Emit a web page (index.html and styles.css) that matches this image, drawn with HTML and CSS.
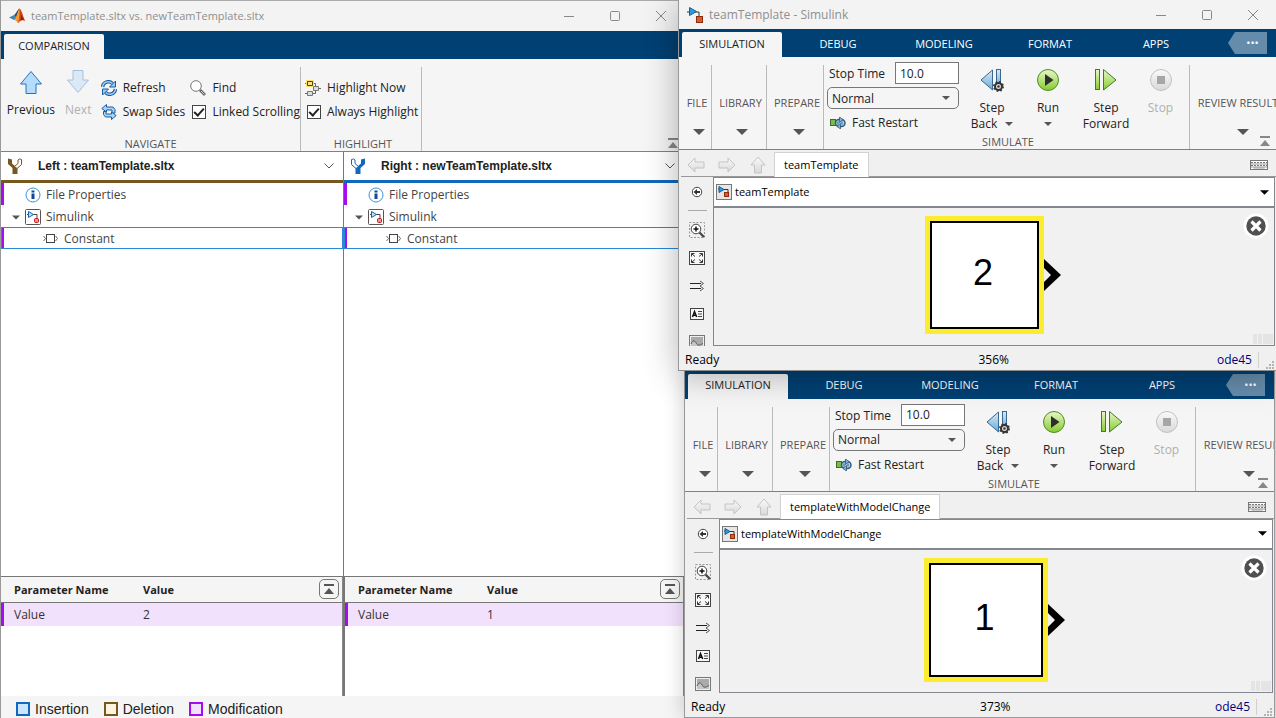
FILE: index.html
```html
<!DOCTYPE html>
<html lang="en">
<head>
    <meta charset="UTF-8">
    <title>teamTemplate.sltx vs. newTeamTemplate.sltx</title>
    <link rel="stylesheet" href="styles.css">
</head>
<body>
    <!-- shared icons -->
    <svg class="sprite" width="0" height="0">
        <defs>
            <linearGradient id="g-green" x1="0" y1="0" x2="0" y2="1"><stop offset="0" stop-color="#e8f7c8"/><stop offset="1" stop-color="#86cc2e"/></linearGradient>
            <linearGradient id="g-blue" x1="0" y1="0" x2="0" y2="1"><stop offset="0" stop-color="#d8ecf8"/><stop offset="1" stop-color="#6aa8d4"/></linearGradient>
            <linearGradient id="g-gray" x1="0" y1="0" x2="0" y2="1"><stop offset="0" stop-color="#fafafa"/><stop offset="1" stop-color="#d8d8d8"/></linearGradient>
        </defs>
        <symbol id="i-min" viewBox="0 0 12 12"><path d="M1 6.500h10" stroke="#888" fill="none"/></symbol>
        <symbol id="i-max" viewBox="0 0 12 12"><rect x="1.500" y="1.500" width="9" height="9" rx="1" stroke="#888" fill="none"/></symbol>
        <symbol id="i-close" viewBox="0 0 12 12"><path d="M1 1l10 10M11 1L1 11" stroke="#888" fill="none"/></symbol>
        <symbol id="i-caret" viewBox="0 0 12 6"><path d="M0 0h12L6 6z"/></symbol>
        <symbol id="i-collapse" viewBox="0 0 12 12"><path d="M1 1h10v2H1zM6 5l5 6H1z"/></symbol>
        <symbol id="i-chevron" viewBox="0 0 10 6"><path d="M.5 .5L5 5L9.500 .5" fill="none" stroke="#555"/></symbol>
        <symbol id="i-info" viewBox="0 0 16 16"><circle cx="8" cy="8" r="7" fill="#fff" stroke="#3a92dc"/><path d="M6.500 3.500h3v2h-3zM6.500 6.500h3V12h-3z" fill="#10489a"/></symbol>
        <symbol id="i-fork" viewBox="0 0 16 16"><path d="M15 .5v5.500l-4.500 4V16h-5V9.500L8 8l3-2.500V1.500z" fill="currentColor"/><path d="M5 2v3.500l3.500 3L6 10.500L1.500 6.500V1.500l2-.5z" fill="#fff" stroke="currentColor"/></symbol>
        <symbol id="i-model" viewBox="0 0 16 16"><rect x=".5" y=".5" width="15" height="15" rx="1" fill="#fff" stroke="#555"/><path d="M2 5.500h2M8 5.500h4v4" stroke="#444" fill="none"/><path d="M3.500 2.500v6l5-3z" fill="#bfe0fa" stroke="#1c5fa8"/><rect x="9.500" y="9.500" width="4" height="4" rx="1" fill="#f09090" stroke="#c01818"/></symbol>
        <symbol id="i-block" viewBox="0 0 16 12"><rect x="3.500" y="1.500" width="8" height="8" fill="#fff" stroke="#444"/><path d="M.5 3l2 2.500L.5 8M12.500 3l2 2.500l-2 2.500" fill="none" stroke="#666"/></symbol>
        <symbol id="i-simulink" viewBox="0 0 16 16"><path d="M0 5h3M7 5h5v4" stroke="#333" fill="none"/><path d="M2.500 .5v8l7-4z" fill="#2c9ade" stroke="#155f9e"/><rect x="9.500" y="9.500" width="6" height="6" fill="#e05a28" stroke="#8e2c10"/></symbol>
        <symbol id="i-modelbox" viewBox="0 0 16 16"><rect x=".5" y=".5" width="15" height="15" fill="#e6e6e6" stroke="#777"/><path d="M2 5h2M8 5.500h4v3" stroke="#333" fill="none"/><path d="M3 2.500v6l5-3z" fill="#2c9ade" stroke="#155f9e"/><rect x="8.500" y="8.500" width="4" height="4" fill="#e05a28" stroke="#8e2c10"/></symbol>
        <symbol id="i-fast" viewBox="0 0 16 12"><rect x=".5" y="2.500" width="5" height="6" fill="#76bd4a" stroke="#3d7022"/><rect x="5.500" y="2.500" width="9.500" height="7" rx="3.500" fill="#b4d4ea" stroke="#2d5c80" stroke-width="1.500"/><path d="M8 4.500v3M12 4.500v3" stroke="#2d5c80"/><path d="M9.500 0l3.500 2.500l-3.500 3zM10.500 6.500l-3.500 3l3.500 2.500z" fill="#82b6da" stroke="#204a68" stroke-width=".7"/></symbol>
        <symbol id="i-stepback" viewBox="0 0 24 24"><path d="M12.500 2v20L1 12z" fill="url(#g-blue)" stroke="#3b6790"/><rect x="16.500" y="1.500" width="4" height="17" fill="url(#g-blue)" stroke="#3b6790"/><circle cx="18.500" cy="18.500" r="3.500" fill="#ddd" stroke="#333" stroke-width="2"/><circle cx="18.500" cy="18.500" r="4.700" fill="none" stroke="#333" stroke-width="1.500" stroke-dasharray="1.800 1.900"/><circle cx="18.500" cy="18.500" r="1.200" fill="#333"/></symbol>
        <symbol id="i-run" viewBox="0 0 24 24"><circle cx="12" cy="12" r="10.500" fill="url(#g-green)" stroke="#4d8c24"/><path d="M9 6v12l8.500-6z" fill="#2e2e2e"/></symbol>
        <symbol id="i-stepfwd" viewBox="0 0 24 24"><rect x="1.500" y="1.500" width="4" height="20" fill="url(#g-green)" stroke="#3f7a2e"/><path d="M9.500 1.500v20.500L22 12z" fill="url(#g-green)" stroke="#3f7a2e"/></symbol>
        <symbol id="i-stop" viewBox="0 0 24 24"><circle cx="12" cy="12" r="10.500" fill="url(#g-gray)" stroke="#c2c2c2"/><rect x="8" y="8" width="8" height="8" fill="#a6a6a6"/></symbol>
        <symbol id="i-navarrow" viewBox="0 0 18 16"><path d="M1 8l7-7v4h9v6H8v4z" fill="url(#g-gray)" stroke="#c4c4c4"/></symbol>
        <symbol id="i-navup" viewBox="0 0 16 18"><path d="M8 1l7 8h-3.500v8h-7V9H1z" fill="url(#g-gray)" stroke="#c4c4c4"/></symbol>
        <symbol id="i-keyboard" viewBox="0 0 18 10"><rect x=".5" y=".5" width="17" height="9" fill="#fff" stroke="#777"/><path d="M1 2.500h16M1 5.500h16" stroke="#777" stroke-dasharray="2 1"/><path d="M1 4h16M3.500 8h11M1 7h16" stroke="#999" fill="none"/></symbol>
        <symbol id="i-hide" viewBox="0 0 16 16"><circle cx="8" cy="8" r="4.700" fill="#fff" stroke="#444"/><path d="M11 8H7" stroke="#333" stroke-width="2"/><path d="M4.500 8L8 5v6z" fill="#333"/></symbol>
        <symbol id="i-zoom" viewBox="0 0 16 16"><rect x=".5" y=".5" width="15" height="15" fill="none" stroke="#999" stroke-dasharray="2 1.500"/><circle cx="7" cy="7" r="4.800" fill="#fff" stroke="#444"/><path d="M4.500 7h5M7 4.500v5" stroke="#111" stroke-width="1.500"/><path d="M10.500 10.500l4.500 4.500" stroke="#444" stroke-width="2.200"/></symbol>
        <symbol id="i-fit" viewBox="0 0 16 16"><rect x=".5" y="1.500" width="15" height="13" fill="#f8f8f8" stroke="#444"/><path d="M2.500 6.500v-3h3M10.500 3.500h3v3M13.500 9.500v3h-3M5.500 12.500h-3v-3M3 4l3 2.500M13 4l-3 2.500M13 12l-3-2.500M3 12l3-2.500" fill="none" stroke="#333"/></symbol>
        <symbol id="i-signal" viewBox="0 0 16 16"><path d="M1 5.500h11M1 10.500h11" stroke="#222"/><path d="M11 3l3.500 2.500L11 8M11 8l3.500 2.500L11 13" fill="none" stroke="#555"/></symbol>
        <symbol id="i-note" viewBox="0 0 16 16"><rect x="1.500" y="2.500" width="13" height="11" fill="#f8f8f8" stroke="#444"/><path d="M3.500 11L5.500 5.500L7.700 11M4 9.200h3" fill="none" stroke="#111" stroke-width="1.500"/><path d="M9 5.500h4M9 8h4M9 10.500h4" stroke="#444"/></symbol>
        <symbol id="i-image" viewBox="0 0 16 16"><rect x=".5" y="1.500" width="15" height="13" fill="#eee" stroke="#777"/><rect x="2" y="3" width="12" height="10" fill="#aaa"/><path d="M2 10c2-5 4-3 5.500-.5s3 2 6.500 0V13H2z" fill="#c4c4c4"/><path d="M2 10c2-5 4-3 5.500-.5s3 2 6.500 0" fill="none" stroke="#555"/></symbol>
        <symbol id="i-dismiss" viewBox="0 0 26 26"><circle cx="13" cy="13" r="12.500" fill="#fff"/><circle cx="13" cy="13" r="9.700" fill="#505050"/><path d="M8.500 8.500l9 9M17.500 8.500l-9 9" stroke="#fff" stroke-width="3.200"/></symbol>
        <symbol id="i-port" viewBox="0 0 17 32"><path d="M0 0L17 16L0 32V23L7 16L0 9z" fill="#000"/></symbol>
        <symbol id="i-grip" viewBox="0 0 9 9"><path d="M6 0h2v2H6zM3 3h2v2H3zM6 3h2v2H6zM0 6h2v2H0zM3 6h2v2H3zM6 6h2v2H6z" fill="#b4b4b4"/></symbol>
    </svg>

    <main class="desktop">
        <section class="window compare">
            <header class="titlebar">
                <svg class="logo" viewBox="0 0 16 16"><path d="M0 9.500l5-2.500l2.500 2.500L5 12z" fill="#3f86b8"/><path d="M5 7c2-.5 3.500-6 5.500-6.500L7.500 9.500z" fill="#26506e"/><path d="M10.500 .5C8.500 4 7.500 9 5 12c2-.5 3 1 4 3c2-1 3-4 7-2C14 8 12.500 1 10.500.5z" fill="#d8501e"/><path d="M10.500 .5c0 5 0 9-1.500 14.500c-1-2-2-3.500-4-3c3-3 3.500-8 5.500-11.500z" fill="#f4a030"/><path d="M10.500 1c1 4 2.500 8 5.500 12c-1.500-2-3.500-1-4.500 0C12.500 9 11.500 5 10.500 1z" fill="#8e1c14"/></svg>
                <h1>teamTemplate.sltx vs. newTeamTemplate.sltx</h1>
                <button class="winbtn" aria-label="Minimize"><svg><use href="#i-min"/></svg></button>
                <button class="winbtn" aria-label="Maximize"><svg><use href="#i-max"/></svg></button>
                <button class="winbtn" aria-label="Close"><svg><use href="#i-close"/></svg></button>
            </header>
            <nav class="tabs">
                <button class="tab active">COMPARISON</button>
            </nav>
            <div class="ribbon">
                <div class="group navigate">
                    <div class="tools">
                        <button class="big"><svg class="icon24" viewBox="0 0 24 24"><path d="M12 1.500L22.500 14H17v9.500H7V14H1.500z" fill="#b4dcfc" stroke="#2b70bb"/></svg>Previous</button>
                        <button class="big" disabled><svg class="icon24" viewBox="0 0 24 24"><path d="M12 22.500L1.500 10H7V.5h10V10h5.500z" fill="#dbe9f6" stroke="#a5c0de"/></svg>Next</button>
                        <div class="stack refresh">
                            <button class="small"><svg class="icon16" viewBox="0 0 16 16"><path d="M1.500 7C2 2 8 0 11.500 3.500M14.500 9C14 14 8 16 4.500 12.500" fill="none" stroke="#1c5ba0" stroke-width="3.500"/><path d="M1.500 7C2 2 8 0 11.500 3.500M14.500 9C14 14 8 16 4.500 12.500" fill="none" stroke="#9ccdf2" stroke-width="1.500"/><path d="M14.500 1v6h-6zM1.500 15V9h6z" fill="#9ccdf2" stroke="#1c5ba0"/></svg>Refresh</button>
                            <button class="small"><svg class="icon16" viewBox="0 0 16 16"><path d="M5.500 .5L.8 4.500L5.500 8V6H11v3h3V5.500L12 3H5.500z" fill="#a8d4f6" stroke="#1c5ba0"/><path d="M10.500 15.500l4.700-4L10.500 8v2H5V7.500H2.500v3l2 2.500h6z" fill="#a8d4f6" stroke="#1c5ba0"/></svg>Swap Sides</button>
                        </div>
                        <div class="stack find">
                            <button class="small"><svg class="icon16" viewBox="0 0 16 16"><circle cx="6" cy="6" r="5.300" fill="#fff" stroke="#777"/><path d="M10 10l5 5" stroke="#666" stroke-width="2.800"/><path d="M11 11l3.500 3.500" stroke="#ccc"/></svg>Find</button>
                            <label class="check"><input type="checkbox" checked>Linked Scrolling</label>
                        </div>
                    </div>
                    <div class="caption">NAVIGATE</div>
                </div>
                <div class="group highlight">
                    <div class="tools">
                        <div class="stack">
                            <button class="small"><svg class="icon16" viewBox="0 0 16 16"><path d="M0 3.500h2M8 3.500h2.500v3M0 13.500h2M8 13.500h2.500v-3M14 8.500h2" stroke="#666" fill="none"/><path d="M1 0h8v7H1z" fill="#fce26a"/><path d="M2.500 1.500h5v4h-5z" fill="#fbe67e" stroke="#4a4214"/><path d="M8.500 6.500h5v4h-5zM2.500 11.500h5v4h-5z" fill="#ddd" stroke="#777"/></svg>Highlight Now</button>
                            <label class="check"><input type="checkbox" checked>Always Highlight</label>
                        </div>
                    </div>
                    <div class="caption">HIGHLIGHT</div>
                </div>
                <button class="collapse" aria-label="Collapse toolstrip"><svg><use href="#i-collapse"/></svg></button>
            </div>

            <div class="panes">
                <div class="pane left">
                    <div class="pane-head">
                        <svg class="icon16 fork"><use href="#i-fork"/></svg>
                        <h2>Left : teamTemplate.sltx</h2>
                        <button class="plain" aria-label="Choose left file"><svg class="chev"><use href="#i-chevron"/></svg></button>
                    </div>
                    <ul class="tree">
                        <li class="changed"><svg class="icon16"><use href="#i-info"/></svg>File Properties</li>
                        <li class="parent"><svg class="twist"><use href="#i-caret"/></svg><svg class="icon16"><use href="#i-model"/></svg>Simulink</li>
                        <li class="changed selected"><svg class="block"><use href="#i-block"/></svg>Constant</li>
                    </ul>
                    <div class="params">
                        <button class="fold" aria-label="Collapse parameters"><svg><use href="#i-collapse"/></svg></button>
                        <table>
                            <thead><tr><th>Parameter Name</th><th>Value</th></tr></thead>
                            <tbody><tr><td>Value</td><td>2</td></tr></tbody>
                        </table>
                    </div>
                </div>
                <div class="pane right">
                    <div class="pane-head">
                        <svg class="icon16 fork"><use href="#i-fork"/></svg>
                        <h2>Right : newTeamTemplate.sltx</h2>
                        <button class="plain" aria-label="Choose right file"><svg class="chev"><use href="#i-chevron"/></svg></button>
                    </div>
                    <ul class="tree">
                        <li class="changed"><svg class="icon16"><use href="#i-info"/></svg>File Properties</li>
                        <li class="parent"><svg class="twist"><use href="#i-caret"/></svg><svg class="icon16"><use href="#i-model"/></svg>Simulink</li>
                        <li class="changed selected"><svg class="block"><use href="#i-block"/></svg>Constant</li>
                    </ul>
                    <div class="params">
                        <button class="fold" aria-label="Collapse parameters"><svg><use href="#i-collapse"/></svg></button>
                        <table>
                            <thead><tr><th>Parameter Name</th><th>Value</th></tr></thead>
                            <tbody><tr><td>Value</td><td>1</td></tr></tbody>
                        </table>
                    </div>
                </div>
            </div>
            <footer class="legend">
                <span class="key insertion">Insertion</span>
                <span class="key deletion">Deletion</span>
                <span class="key modification">Modification</span>
            </footer>
        </section>

        <div class="models">
            <section class="window model front">
                <header class="titlebar">
                    <svg class="logo"><use href="#i-simulink"/></svg>
                    <h1>teamTemplate - Simulink</h1>
                    <button class="winbtn" aria-label="Minimize"><svg><use href="#i-min"/></svg></button>
                    <button class="winbtn" aria-label="Maximize"><svg><use href="#i-max"/></svg></button>
                    <button class="winbtn" aria-label="Close"><svg><use href="#i-close"/></svg></button>
                </header>
                <nav class="tabs">
                    <button class="tab active">SIMULATION</button>
                    <button class="tab">DEBUG</button>
                    <button class="tab">MODELING</button>
                    <button class="tab">FORMAT</button>
                    <button class="tab">APPS</button>
                    <button class="more" aria-label="More">•••</button>
                </nav>
                <div class="ribbon">
                    <button class="folded file">FILE<svg><use href="#i-caret"/></svg></button>
                    <button class="folded library">LIBRARY<svg><use href="#i-caret"/></svg></button>
                    <button class="folded prepare">PREPARE<svg><use href="#i-caret"/></svg></button>
                    <div class="group simulate">
                        <div class="tools">
                            <div class="options">
                                <label for="stop1">Stop Time</label>
                                <input id="stop1" type="text" value="10.0">
                                <div class="mode">
                                    <select aria-label="Simulation mode"><option>Normal</option></select>
                                    <svg><use href="#i-caret"/></svg>
                                </div>
                                <button class="small"><svg class="icon16"><use href="#i-fast"/></svg>Fast Restart</button>
                            </div>
                            <button class="big"><svg class="icon24"><use href="#i-stepback"/></svg>Step<span>Back <svg class="caret"><use href="#i-caret"/></svg></span></button>
                            <button class="big"><svg class="icon24"><use href="#i-run"/></svg>Run<span><svg class="caret"><use href="#i-caret"/></svg></span></button>
                            <button class="big wide"><svg class="icon24"><use href="#i-stepfwd"/></svg>Step<span>Forward</span></button>
                            <button class="big" disabled><svg class="icon24"><use href="#i-stop"/></svg>Stop</button>
                        </div>
                        <div class="caption">SIMULATE</div>
                    </div>
                    <button class="folded review">REVIEW RESULTS<svg><use href="#i-caret"/></svg></button>
                    <button class="collapse" aria-label="Collapse toolstrip"><svg><use href="#i-collapse"/></svg></button>
                </div>
                <div class="docbar">
                    <button class="nav" aria-label="Back" disabled><svg><use href="#i-navarrow"/></svg></button>
                    <button class="nav forward" aria-label="Forward" disabled><svg><use href="#i-navarrow"/></svg></button>
                    <button class="nav up" aria-label="Up" disabled><svg><use href="#i-navup"/></svg></button>
                    <button class="doc">teamTemplate</button>
                    <button class="keys" aria-label="Shortcuts"><svg><use href="#i-keyboard"/></svg></button>
                </div>
                <div class="editor">
                    <div class="palette">
                        <button aria-label="Hide browser"><svg><use href="#i-hide"/></svg></button>
                        <hr>
                        <button aria-label="Zoom"><svg><use href="#i-zoom"/></svg></button>
                        <button aria-label="Fit to view"><svg><use href="#i-fit"/></svg></button>
                        <button aria-label="Signals"><svg><use href="#i-signal"/></svg></button>
                        <button aria-label="Annotation"><svg><use href="#i-note"/></svg></button>
                        <button aria-label="Image"><svg><use href="#i-image"/></svg></button>
                    </div>
                    <div class="view">
                        <button class="crumb"><svg class="icon16"><use href="#i-modelbox"/></svg>teamTemplate<svg class="drop"><use href="#i-caret"/></svg></button>
                        <div class="canvas">
                            <div class="constant">2<svg class="port"><use href="#i-port"/></svg></div>
                            <button class="dismiss" aria-label="Clear highlight"><svg><use href="#i-dismiss"/></svg></button>
                            <div class="overview"><i></i><i></i><i></i></div>
                        </div>
                    </div>
                </div>
                <footer class="status">
                    <span>Ready</span><span>356%</span><a href="#solver">ode45</a>
                    <svg class="grip"><use href="#i-grip"/></svg>
                </footer>
            </section>

            <section class="window model back">
                <nav class="tabs">
                    <button class="tab active">SIMULATION</button>
                    <button class="tab">DEBUG</button>
                    <button class="tab">MODELING</button>
                    <button class="tab">FORMAT</button>
                    <button class="tab">APPS</button>
                    <button class="more" aria-label="More">•••</button>
                </nav>
                <div class="ribbon">
                    <button class="folded file">FILE<svg><use href="#i-caret"/></svg></button>
                    <button class="folded library">LIBRARY<svg><use href="#i-caret"/></svg></button>
                    <button class="folded prepare">PREPARE<svg><use href="#i-caret"/></svg></button>
                    <div class="group simulate">
                        <div class="tools">
                            <div class="options">
                                <label for="stop2">Stop Time</label>
                                <input id="stop2" type="text" value="10.0">
                                <div class="mode">
                                    <select aria-label="Simulation mode"><option>Normal</option></select>
                                    <svg><use href="#i-caret"/></svg>
                                </div>
                                <button class="small"><svg class="icon16"><use href="#i-fast"/></svg>Fast Restart</button>
                            </div>
                            <button class="big"><svg class="icon24"><use href="#i-stepback"/></svg>Step<span>Back <svg class="caret"><use href="#i-caret"/></svg></span></button>
                            <button class="big"><svg class="icon24"><use href="#i-run"/></svg>Run<span><svg class="caret"><use href="#i-caret"/></svg></span></button>
                            <button class="big wide"><svg class="icon24"><use href="#i-stepfwd"/></svg>Step<span>Forward</span></button>
                            <button class="big" disabled><svg class="icon24"><use href="#i-stop"/></svg>Stop</button>
                        </div>
                        <div class="caption">SIMULATE</div>
                    </div>
                    <button class="folded review">REVIEW RESULTS<svg><use href="#i-caret"/></svg></button>
                    <button class="collapse" aria-label="Collapse toolstrip"><svg><use href="#i-collapse"/></svg></button>
                </div>
                <div class="docbar">
                    <button class="nav" aria-label="Back" disabled><svg><use href="#i-navarrow"/></svg></button>
                    <button class="nav forward" aria-label="Forward" disabled><svg><use href="#i-navarrow"/></svg></button>
                    <button class="nav up" aria-label="Up" disabled><svg><use href="#i-navup"/></svg></button>
                    <button class="doc">templateWithModelChange</button>
                    <button class="keys" aria-label="Shortcuts"><svg><use href="#i-keyboard"/></svg></button>
                </div>
                <div class="editor">
                    <div class="palette">
                        <button aria-label="Hide browser"><svg><use href="#i-hide"/></svg></button>
                        <hr>
                        <button aria-label="Zoom"><svg><use href="#i-zoom"/></svg></button>
                        <button aria-label="Fit to view"><svg><use href="#i-fit"/></svg></button>
                        <button aria-label="Signals"><svg><use href="#i-signal"/></svg></button>
                        <button aria-label="Annotation"><svg><use href="#i-note"/></svg></button>
                        <button aria-label="Image"><svg><use href="#i-image"/></svg></button>
                    </div>
                    <div class="view">
                        <button class="crumb"><svg class="icon16"><use href="#i-modelbox"/></svg>templateWithModelChange<svg class="drop"><use href="#i-caret"/></svg></button>
                        <div class="canvas">
                            <div class="constant large">1<svg class="port"><use href="#i-port"/></svg></div>
                            <button class="dismiss" aria-label="Clear highlight"><svg><use href="#i-dismiss"/></svg></button>
                            <div class="overview"><i></i><i></i><i></i></div>
                        </div>
                    </div>
                </div>
                <footer class="status">
                    <span>Ready</span><span>373%</span><a href="#solver">ode45</a>
                    <svg class="grip"><use href="#i-grip"/></svg>
                </footer>
            </section>
        </div>
    </main>
</body>
</html>
```

FILE: styles.css
```css
*, *::before, *::after {
    box-sizing: border-box;
}
body {
    margin: 0;
    font-family: "Open Sans", "Noto Sans", sans-serif;
    font-size: 12px;
    line-height: 16px;
    color: #222;
    background: #e8e8e8;
}
button, input, select {
    font: inherit;
    color: inherit;
}
button {
    padding: 0;
    border: 0;
    background: none;
    white-space: nowrap;
}
svg {
    display: block;
    flex: none;
}
.sprite {
    position: absolute;
}
.icon16 {
    width: 16px;
    height: 16px;
}
.icon24 {
    width: 24px;
    height: 24px;
}

/* windows */
.desktop {
    display: grid;
    grid-template-columns: 684fr 592fr;
    height: 100vh;
    min-height: 600px;
    overflow: hidden;
}
.window {
    display: flex;
    flex-direction: column;
    min-width: 0;
    min-height: 0;
    overflow: hidden;
    background: #f0f0f0;
    border-left: 1px solid #999;
}
.models {
    display: flex;
    flex-direction: column;
    min-width: 0;
    min-height: 0;
    position: relative;
}
.front {
    flex: 371 1 0;
    z-index: 2;
    margin-left: -6px;
    border-bottom: 1px solid #8c8c8c;
    box-shadow: 0 4px 32px rgba(0, 0, 0, .3);
}
.back {
    flex: 347 1 0;
    z-index: 1;
    margin-right: 1px;
    border-right: 1px solid #999;
    border-bottom: 1px solid #999;
    box-shadow: 0 0 20px rgba(0, 0, 0, .2);
}
.titlebar {
    display: flex;
    align-items: center;
    flex: none;
    height: 29px;
    padding-left: 8px;
    background: #f3f3f3;
}
.titlebar h1 {
    flex: 1;
    margin: 0 0 0 6px;
    font-size: 12px;
    font-weight: normal;
    color: #8f8f8f;
}
.compare .titlebar {
    height: 31px;
    border-top: 1px solid #aaa;
}
.compare .titlebar h1 {
    font-size: 11px;
}
.logo {
    width: 16px;
    height: 16px;
}
.winbtn {
    display: grid;
    place-items: center;
    width: 46px;
    height: 28px;
}
.winbtn svg {
    width: 12px;
    height: 12px;
}

/* toolstrip */
.tabs {
    display: flex;
    align-items: flex-end;
    gap: 6px;
    flex: none;
    height: 28px;
    padding: 0 9px 0 3px;
    background: #004073;
}
.tab {
    width: 100px;
    height: 25px;
    padding-bottom: 2px;
    font-size: 11px;
    color: #fff;
}
.tab.active {
    background: #f5f5f5;
    color: #222;
    border-radius: 2px 2px 0 0;
}
.more {
    align-self: center;
    width: 39px;
    height: 22px;
    margin-left: auto;
    padding-left: 10px;
    font-size: 11px;
    line-height: 20px;
    color: #fff;
    background: #668cab;
    clip-path: polygon(7px 0, 100% 0, 100% 100%, 7px 100%, 0 50%);
}
.ribbon {
    display: flex;
    flex: none;
    height: 93px;
    padding-top: 8px;
    position: relative;
    background: #f5f5f5;
    border-bottom: 1px solid #808080;
    overflow: hidden;
}
.group {
    display: flex;
    flex-direction: column;
    flex: none;
    border-right: 1px solid #bbb;
}
.tools {
    display: flex;
    flex: 1;
}
.caption {
    height: 15px;
    font-size: 11px;
    line-height: 15px;
    color: #555;
    text-align: center;
}
.big {
    display: flex;
    flex-direction: column;
    align-items: center;
    padding-top: 3px;
}
.big .icon24 {
    margin-bottom: 8px;
}
.big:disabled {
    color: #b0b0b0;
}
.big span {
    display: flex;
    align-items: center;
    gap: 8px;
    height: 16px;
}
.caret {
    width: 8px;
    height: 4px;
    fill: #555;
}
.small {
    display: flex;
    align-items: center;
    gap: 6px;
}
.check {
    display: flex;
    align-items: center;
    gap: 6px;
    white-space: nowrap;
}
.check input {
    appearance: none;
    width: 14px;
    height: 14px;
    margin: 0 0 0 2px;
    border: 1px solid #444;
    background: #fff;
    display: grid;
    place-items: center;
}
.check input:checked::after {
    content: "";
    width: 10px;
    height: 6px;
    margin-top: -3px;
    border-left: 2px solid #222;
    border-bottom: 2px solid #222;
    transform: rotate(-48deg);
}
.stack {
    display: flex;
    flex-direction: column;
    gap: 8px;
    padding-top: 13px;
}
.navigate {
    width: 300px;
}
.navigate .big {
    width: 60px;
}
.navigate .big:disabled {
    width: 35px;
}
.refresh {
    width: 93px;
    padding-left: 5px;
}
.find {
    padding-left: 2px;
}
.highlight {
    width: 121px;
    padding-left: 4px;
}
.collapse {
    position: absolute;
    right: 5px;
    bottom: 2px;
}
.collapse svg {
    width: 12px;
    height: 12px;
    fill: #888;
}
.folded {
    display: flex;
    flex-direction: column;
    align-items: center;
    gap: 18px;
    flex: none;
    padding-top: 30px;
    font-size: 11px;
    color: #555;
    border-right: 1px solid #bbb;
}
.folded svg {
    width: 12px;
    height: 6px;
    margin-left: 3px;
    fill: #555;
}
.file {
    width: 33px;
    padding-left: 4px;
}
.library {
    width: 55px;
    padding-left: 3px;
}
.prepare {
    width: 57px;
    padding-left: 4px;
}
.review {
    width: 102px;
    border: 0;
}
.simulate {
    width: 366px;
    padding-left: 3px;
}
.simulate .big {
    width: 56px;
}
.simulate .wide {
    width: 60px;
}
.simulate .big:disabled {
    width: 49px;
}
.options {
    display: grid;
    grid-template-columns: 68px 64px;
    grid-template-rows: 22px 22px 22px;
    row-gap: 3px;
    align-items: center;
    align-content: start;
    margin: -3px 5px 0 0;
}
.options label {
    padding: 2px 0 0 2px;
}
.options input {
    width: 100%;
    height: 22px;
    padding: 0 4px;
    border: 1px solid #777;
    background: #fff;
}
.mode {
    grid-column: span 2;
    position: relative;
}
.mode select {
    appearance: none;
    width: 100%;
    height: 22px;
    padding: 1px 4px 0;
    border: 1px solid #777;
    border-radius: 5px;
    background: #f5f5f5;
}
.mode svg {
    position: absolute;
    right: 9px;
    top: 9px;
    width: 8px;
    height: 4px;
    fill: #555;
}
.options .small {
    grid-column: span 2;
    padding-left: 3px;
}
.options .icon16 {
    height: 12px;
}

/* comparison report */
.panes {
    display: grid;
    grid-template-columns: 343fr 340fr;
    flex: 1;
    min-height: 0;
}
.pane {
    display: flex;
    flex-direction: column;
    min-width: 0;
    background: #fff;
}
.pane.left {
    border-right: 1px solid #777;
}
.pane-head {
    display: flex;
    align-items: center;
    height: 31px;
    padding: 0 9px 1px 6px;
    border-bottom: 3px solid #75571f;
}
.right .pane-head {
    border-color: #1169bd;
}
.fork {
    color: #1169bd;
}
.left .fork {
    color: #75571f;
    transform: scaleX(-1);
}
.pane-head h2 {
    flex: 1;
    margin: 0 0 0 15px;
    font-family: "Liberation Sans", Arial, sans-serif;
    font-size: 12px;
    line-height: 16px;
}
.chev {
    width: 10px;
    height: 6px;
}
.tree {
    flex: 1;
    margin: 0;
    padding: 0;
    list-style: none;
    color: #444;
}
.tree li {
    display: flex;
    align-items: center;
    gap: 5px;
    height: 22px;
    padding-top: 2px;
}
.tree .changed {
    padding-left: 21px;
    border-left: 3px solid #a50dee;
}
.tree .parent {
    padding-left: 11px;
}
.tree .selected {
    padding-left: 39px;
    outline: 1px solid #2a88d8;
    outline-offset: -1px;
}
.twist {
    width: 8px;
    height: 5px;
    fill: #555;
}
.block {
    width: 16px;
    height: 12px;
}
.params {
    height: 120px;
    position: relative;
    border-top: 1px solid #777;
    border-right: 1px solid #888;
}
.right .params {
    border-left: 1px solid #777;
}
.params table {
    width: 100%;
    border-spacing: 0;
    table-layout: fixed;
}
.params th, .params td {
    height: 23px;
    padding: 0;
    text-align: left;
}
.params th {
    height: 26px;
    font-size: 11px;
    background: #f5f5f5;
    border-bottom: 1px solid #777;
}
.params th:first-child {
    width: 142px;
    padding-left: 13px;
}
.params td {
    background: #f2e1fd;
    color: #333;
}
.params td:first-child {
    padding-left: 10px;
    border-left: 3px solid #a50dee;
}
.fold {
    display: grid;
    place-items: center;
    position: absolute;
    top: 2px;
    right: 3px;
    width: 20px;
    height: 20px;
    border: 1px solid #777;
    border-radius: 5px;
}
.fold svg {
    width: 14px;
    height: 12px;
    fill: #555;
}
.legend {
    display: flex;
    gap: 15px;
    flex: none;
    height: 22px;
    padding: 5px 15px 1px;
    font-family: "Liberation Sans", Arial, sans-serif;
    font-size: 14px;
    line-height: 16px;
    background: #f5f5f5;
}
.key {
    display: flex;
    align-items: center;
    gap: 5px;
}
.key::before {
    content: "";
    width: 14px;
    height: 14px;
    border: 2px solid #1169bd;
    background: #cce6ff;
}
.deletion::before {
    border-color: #75571f;
    background: #fff3de;
}
.modification::before {
    border-color: #a50dee;
    background: #f2e1fd;
}

/* model editor */
.docbar {
    display: flex;
    align-items: center;
    flex: none;
    height: 27px;
    margin-left: 2px;
    padding: 4px 0 0 6px;
    border-bottom: 1px solid #999;
}
.nav {
    width: 31px;
}
.nav svg {
    width: 18px;
    height: 16px;
}
.nav.forward svg {
    transform: scaleX(-1);
}
.nav.up svg {
    width: 16px;
    height: 18px;
    margin-left: 1px;
}
.doc {
    align-self: flex-end;
    height: 25px;
    margin: 0 auto -1px -6px;
    padding: 0 9px;
    font-size: 11px;
    color: #000;
    background: #fff;
    border: 1px solid #d2d2d2;
    border-bottom: 0;
}
.keys {
    margin-right: 8px;
}
.keys svg {
    width: 18px;
    height: 10px;
}
.editor {
    display: flex;
    flex: 1;
    min-height: 0;
    padding-right: 1px;
}
.palette {
    display: flex;
    flex-direction: column;
    align-items: center;
    gap: 12px;
    width: 34px;
    padding: 7px 0 0 2px;
    overflow: hidden;
}
.palette svg {
    width: 16px;
    height: 16px;
}
.palette button {
    flex: none;
}
.palette hr {
    width: 19px;
    margin: -2px 0 -1px;
    border: 0;
    border-top: 1px solid #aaa;
    flex: none;
}
.view {
    display: flex;
    flex-direction: column;
    flex: 1;
    min-width: 0;
    border: 1px solid #828790;
}
.crumb {
    display: flex;
    align-items: center;
    gap: 3px;
    flex: none;
    height: 30px;
    padding: 0 5px 0 2px;
    font-size: 11px;
    color: #000;
    background: #fff;
    border-bottom: 2px solid #828790;
}
.drop {
    width: 9px;
    height: 5px;
    margin-left: auto;
}
.canvas {
    flex: 1;
    position: relative;
    overflow: hidden;
    background: #f1f1f1;
}
.constant {
    display: grid;
    place-items: center;
    position: absolute;
    top: 8px;
    left: calc(50% - 69px);
    width: 119px;
    height: 118px;
    padding: 0 3px 4px 0;
    font-family: "Liberation Sans", Arial, sans-serif;
    font-size: 36px;
    line-height: 40px;
    color: #000;
    background: #fff;
    border: 5px solid #fbec30;
    box-shadow: inset 0 0 0 2px #000;
}
.constant.large {
    left: calc(50% - 72px);
    width: 124px;
    height: 124px;
}
.port {
    position: absolute;
    left: calc(100% + 5px);
    top: calc(50% - 16px);
    width: 17px;
    height: 32px;
}
.dismiss {
    position: absolute;
    top: 5px;
    right: 5px;
}
.dismiss svg {
    width: 26px;
    height: 26px;
}
.overview {
    display: flex;
    gap: 1px;
    position: absolute;
    right: 1px;
    bottom: 1px;
}
.overview i {
    width: 4px;
    height: 10px;
    background: #e4e4e4;
}
.overview i:last-child {
    width: 10px;
}
.status {
    display: grid;
    grid-template-columns: 294fr 239fr auto 16px;
    align-items: center;
    flex: none;
    height: 24px;
    padding: 4px 1px 0 6px;
    color: #000;
}
.status a {
    padding-right: 6px;
    color: #000080;
    text-decoration: none;
    border-right: 1px solid #d0d0d0;
}
.grip {
    align-self: end;
    justify-self: end;
    width: 9px;
    height: 9px;
}
```
